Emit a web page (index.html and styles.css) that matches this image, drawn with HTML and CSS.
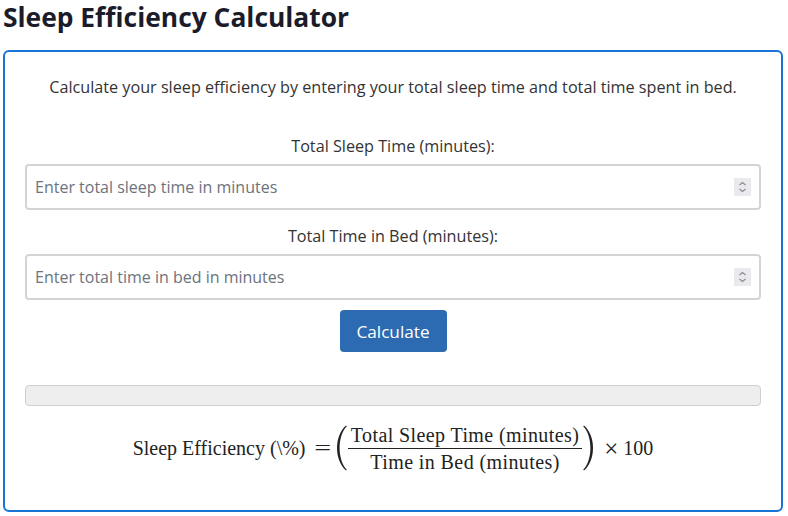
FILE: index.html
```html
<!DOCTYPE html>
<html lang="en">
<head>
<meta charset="utf-8">
<title>Sleep Efficiency Calculator</title>
<link rel="stylesheet" href="styles.css">
</head>
<body>
<h1 class="title">Sleep Efficiency Calculator</h1>
<div class="card">
  <p class="intro">Calculate your sleep efficiency by entering your total sleep time and total time spent in bed.</p>
  <label class="label label-first" for="sleep">Total Sleep Time (minutes):</label>
  <div class="field">
    <input class="input" id="sleep" type="number" placeholder="Enter total sleep time in minutes">
    <span class="spin"><svg width="17" height="18" viewBox="0 0 17 18"><path d="M5.5 7 L8.5 4.5 L11.5 7" fill="none" stroke="#8a8a8a" stroke-width="1.1"/><path d="M5.5 11 L8.5 13.5 L11.5 11" fill="none" stroke="#8a8a8a" stroke-width="1.1"/></svg></span>
  </div>
  <label class="label" for="bed">Total Time in Bed (minutes):</label>
  <div class="field">
    <input class="input" id="bed" type="number" placeholder="Enter total time in bed in minutes">
    <span class="spin"><svg width="17" height="18" viewBox="0 0 17 18"><path d="M5.5 7 L8.5 4.5 L11.5 7" fill="none" stroke="#8a8a8a" stroke-width="1.1"/><path d="M5.5 11 L8.5 13.5 L11.5 11" fill="none" stroke="#8a8a8a" stroke-width="1.1"/></svg></span>
  </div>
  <button class="btn" type="button">Calculate</button>
  <div class="result"></div>
  <div class="formula">
    <span class="m-text">Sleep Efficiency (\%)</span>
    <span class="m-eq">=</span>
    <svg class="paren" width="12" height="46" viewBox="0 0 12 46"><path d="M11 0.5 C-1 11, -1 35, 11 45.5 L11.8 44.7 C2.2 35, 2.2 11, 11.8 1.3 Z" fill="#222"/></svg>
    <span class="frac">
      <span class="num">Total Sleep Time (minutes)</span>
      <span class="den">Time in Bed (minutes)</span>
    </span>
    <svg class="paren" width="12" height="46" viewBox="0 0 12 46"><path d="M1 0.5 C13 11, 13 35, 1 45.5 L0.2 44.7 C9.8 35, 9.8 11, 0.2 1.3 Z" fill="#222"/></svg>
    <span class="m-times">×</span>
    <span class="m-text">100</span>
  </div>
</div>
</body>
</html>
```

FILE: styles.css
```css
html, body {
  background: #ffffff;
}
body {
  margin: 0 5px 0 3px;
  font-family: "Open Sans", "Noto Sans", sans-serif;
  color: #333333;
}
.title {
  margin: 0;
  height: 50px;
  padding-top: 1px;
  box-sizing: border-box;
  font-size: 26.4px;
  line-height: 32px;
  font-weight: 700;
  color: #1b1b2a;
}
.card {
  border: 2px solid #1a74d6;
  border-radius: 6px;
  padding: 23px 20px 37px 20px;
  display: flex;
  flex-direction: column;
  align-items: stretch;
}
.intro {
  margin: 0;
  text-align: center;
  font-size: 16.2px;
  line-height: 24px;
}
.label {
  display: block;
  text-align: center;
  font-size: 16.2px;
  line-height: 24px;
  margin-top: 14px;
  margin-bottom: 6px;
}
.label-first {
  margin-top: 35px;
}
.field {
  position: relative;
}
.input {
  display: block;
  width: 100%;
  box-sizing: border-box;
  height: 46px;
  border: 2px solid #d4d4d4;
  border-radius: 4px;
  padding: 0 8px;
  font-family: inherit;
  font-size: 16px;
  color: #333;
  -moz-appearance: textfield;
}
.input::placeholder {
  color: #6c737d;
}
.input::-webkit-inner-spin-button,
.input::-webkit-outer-spin-button {
  -webkit-appearance: none;
  margin: 0;
}
.spin {
  position: absolute;
  right: 10px;
  top: 14px;
  width: 17px;
  height: 18px;
  background: #e9e9ee;
  display: block;
}
.spin svg {
  display: block;
}
.btn {
  align-self: center;
  margin-top: 10px;
  width: 107px;
  height: 42px;
  border: none;
  border-radius: 4px;
  background: #2c6bb1;
  color: #ffffff;
  font-family: inherit;
  font-size: 17.2px;
  padding: 0;
}
.result {
  margin-top: 33px;
  height: 21px;
  box-sizing: border-box;
  background: #eeeeee;
  border: 1px solid #cfcfcf;
  border-radius: 4px;
}
.formula {
  margin-top: 17px;
  height: 50px;
  display: flex;
  align-items: center;
  justify-content: center;
  font-family: "Liberation Serif", "Times New Roman", serif;
  font-size: 20px;
  color: #222;
}
.m-eq {
  display: inline-block;
  transform: scaleX(1.5);
  margin: 0 6px 0 11px;
}
.m-times {
  font-size: 25px;
  line-height: 1;
  margin: 0 5px 0 8px;
}
.paren {
  display: block;
  margin: 0 1px;
}
.frac {
  display: flex;
  flex-direction: column;
  align-items: center;
  line-height: 24px;
  letter-spacing: 0.4px;
}
.num {
  padding: 0 3px 1px;
  border-bottom: 1px solid #222;
}
.den {
  padding: 1px 3px 0;
}
```
